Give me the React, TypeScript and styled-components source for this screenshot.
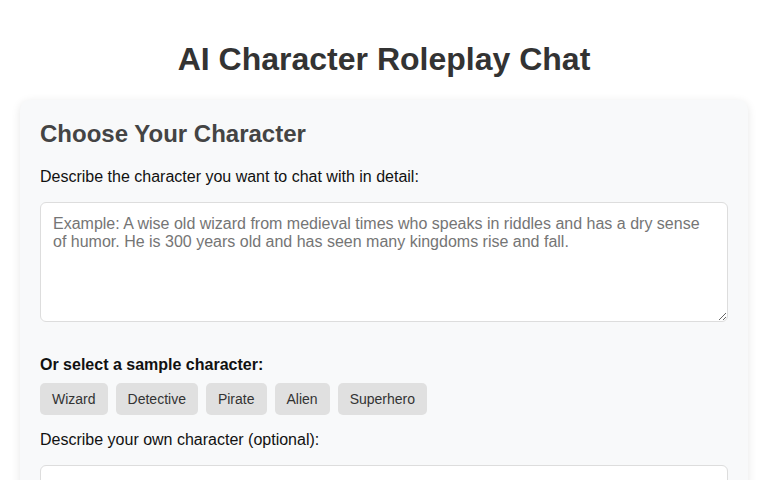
import styled, { createGlobalStyle } from "styled-components";

const GlobalStyle = createGlobalStyle`
  body {
    margin: 0;
    font-family: "Liberation Sans", Arial, sans-serif;
    background: #ffffff;
    color: #333;
  }
  * {
    box-sizing: border-box;
  }
`;

const Container = styled.div`
  max-width: 800px;
  margin: 0 auto;
  padding: 20px;
`;

const Title = styled.h1`
  text-align: center;
  color: #333;
  font-size: 32px;
  margin: 21.44px 0;
`;

const Card = styled.section`
  background-color: #f8f9fa;
  border-radius: 10px;
  box-shadow: 0 2px 10px rgba(0, 0, 0, 0.1);
  padding: 20px;
`;

const CardTitle = styled.h2`
  color: #444;
  font-size: 24px;
  margin: 0 0 20px;
`;

const Label = styled.label<{ $bold?: boolean }>`
  display: block;
  font-size: 16px;
  color: #111;
  font-weight: ${(p) => (p.$bold ? 700 : 400)};
  margin-bottom: ${(p) => (p.$bold ? "9px" : "16px")};
`;

const TextArea = styled.textarea<{ $height: number }>`
  display: block;
  width: 100%;
  height: ${(p) => p.$height}px;
  padding: 12px;
  border: 1px solid #ddd;
  border-radius: 6px;
  background: #fff;
  font-family: "Liberation Sans", Arial, sans-serif;
  font-size: 16px;
  line-height: 18px;
  color: #333;
  margin-bottom: 34px;

  &::placeholder {
    color: #757575;
  }
`;

const SampleRow = styled.div`
  display: flex;
  gap: 8px;
  margin-bottom: 16px;
`;

const SampleButton = styled.button`
  height: 32px;
  padding: 0 12px;
  border: none;
  border-radius: 5px;
  background-color: #e0e0e0;
  color: #333;
  font-family: "Liberation Sans", Arial, sans-serif;
  font-size: 14px;
  cursor: pointer;

  &:hover {
    background-color: #d0d0d0;
  }
`;

const samples = ["Wizard", "Detective", "Pirate", "Alien", "Superhero"];

export default function App() {
  return (
    <>
      <GlobalStyle />
      <Container>
        <Title>AI Character Roleplay Chat</Title>
        <Card>
          <CardTitle>Choose Your Character</CardTitle>
          <Label htmlFor="character">
            Describe the character you want to chat with in detail:
          </Label>
          <TextArea
            id="character"
            $height={120}
            placeholder="Example: A wise old wizard from medieval times who speaks in riddles and has a dry sense of humor. He is 300 years old and has seen many kingdoms rise and fall."
          />
          <Label $bold>Or select a sample character:</Label>
          <SampleRow>
            {samples.map((name) => (
              <SampleButton key={name}>{name}</SampleButton>
            ))}
          </SampleRow>
          <Label htmlFor="own">Describe your own character (optional):</Label>
          <TextArea id="own" $height={100} />
        </Card>
      </Container>
    </>
  );
}
